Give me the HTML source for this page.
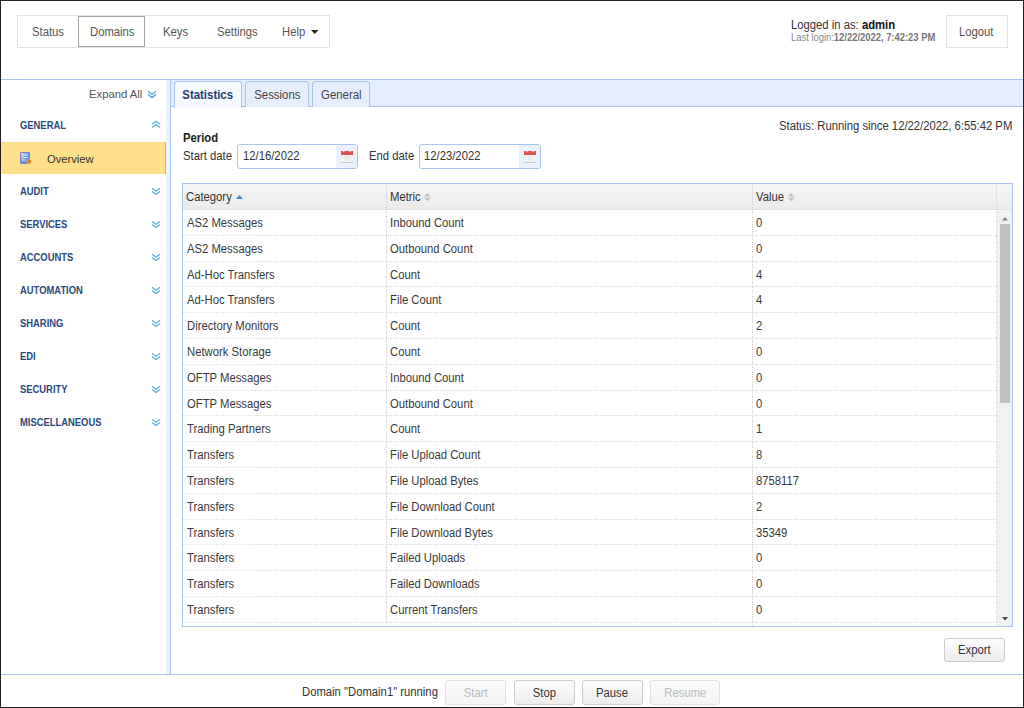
<!DOCTYPE html>
<html><head><meta charset="utf-8">
<style>
*{box-sizing:border-box;margin:0;padding:0}
html,body{width:1024px;height:708px;overflow:hidden;background:#fff}
body{position:relative;font-family:"Liberation Sans",sans-serif;font-size:12px;color:#333}
.a{position:absolute}
.t{position:absolute;white-space:nowrap;line-height:14px;height:14px;transform:scaleX(0.94);transform-origin:0 0}
#frame{position:absolute;left:0;top:0;width:1024px;height:708px;border:1px solid #222;z-index:50;pointer-events:none}
#nav{left:17px;top:15px;width:313px;height:33px;border:1px solid #e4e4e8}
#dom{left:78px;top:16px;width:67px;height:31px;border:1px solid #a3a3a3}
.navt{color:#555}
#logout{left:946px;top:15px;width:62px;height:33px;border:1px solid #e4e4e8}
#hline{left:0;top:79px;width:1024px;height:1px;background:#a9c5ec}
#fline{left:0;top:674px;width:1024px;height:1px;background:#a9c5ec}
#strip{left:166px;top:80px;width:4px;height:594px;background:#ecf2fb}
#vline{left:170px;top:80px;width:1px;height:594px;background:#a9c5ec}
#tabbar{left:171px;top:80px;width:852px;height:27px;background:#e3edfb;border-bottom:1px solid #a9c5ec}
.tab{position:absolute;top:1px;height:26px;border:1px solid #a9c5ec;border-bottom:none;border-radius:4px 4px 0 0;background:#e6eefb;text-align:center;line-height:26px;color:#444;white-space:nowrap}
.tab span{display:inline-block;transform:scaleX(0.95)}
.tab.act{background:#f6f9fe;height:27px;font-weight:bold;color:#1f3d6e}
.sec{color:#2b4a7c;font-weight:bold;font-size:10px}
#ov{left:1px;top:142px;width:165px;height:32px;background:#ffe08a;border-right:1.5px solid #f5a840}
.inp{position:absolute;top:144px;height:25px;border:1px solid #a9c5ec;border-radius:3px;background:#fff;overflow:hidden}
.inp .cal{position:absolute;right:0;top:0;width:21px;height:23px;background:#eaf1fc}
#tbl{left:182px;top:183px;width:831px;height:444px;border:1px solid #a9c5ec;overflow:hidden;background:#fff}
#thead{position:absolute;left:0;top:0;width:829px;height:26px;background:linear-gradient(#f5f5f5,#ebebeb);border-bottom:1px solid #e2e2e2}
.cd{position:absolute;top:0;width:1px;background:repeating-linear-gradient(#d8d8d8 0 1.25px,transparent 1.25px 2.5px)}
.row{position:absolute;left:0;width:814px;height:25.8px;background:repeating-linear-gradient(90deg,#dedede 0 1.25px,transparent 1.25px 2.5px) left bottom/100% 1px no-repeat}
.row span{position:absolute;top:6px;color:#3a3a3a;line-height:14px;white-space:nowrap;transform:scaleX(0.94);transform-origin:0 0}
#sb{position:absolute;left:814px;top:26px;width:15px;height:417px;background:#f1f1f1}
.btn{position:absolute;border:1px solid #cbcbcb;border-radius:3px;background:linear-gradient(#fdfdfd,#ececec);text-align:center;color:#333;white-space:nowrap}
.btn span{display:inline-block;transform:scaleX(0.94)}
.btn.dis{border-color:#e0e0e0;background:linear-gradient(#fbfbfb,#f3f3f3);color:#bbb}
</style></head><body>

<div id="nav" class="a"></div>
<div id="dom" class="a"></div>
<div class="t navt" style="left:32px;top:25px">Status</div>
<div class="t navt" style="left:89.5px;top:25px">Domains</div>
<div class="t navt" style="left:163px;top:25px">Keys</div>
<div class="t navt" style="left:216.5px;top:25px">Settings</div>
<div class="t navt" style="left:281.5px;top:25px">Help</div>
<svg class="a" style="left:311px;top:30px" width="8" height="4"><path d="M0 0H7.5L3.75 4Z" fill="#222"/></svg>

<div class="t" style="left:790.5px;top:18px;color:#333">Logged in as: <b style="color:#111">admin</b></div>
<div class="t" style="left:790.5px;top:30.5px;font-size:10px;color:#888">Last login:<b style="color:#777">12/22/2022, 7:42:23 PM</b></div>
<div id="logout" class="a"></div>
<div class="t navt" style="left:959px;top:25px">Logout</div>

<div id="hline" class="a"></div>
<div id="fline" class="a"></div>

<div class="t" style="left:89px;top:87px;color:#555;font-size:11.3px;transform:none">Expand All</div>
<svg class="a" style="left:147px;top:90px" width="10" height="9"><path d="M1 1.2L5 4.2L9 1.2M1 4.6L5 7.6L9 4.6" stroke="#4aa3e0" stroke-width="1.3" fill="none"/></svg>

<div class="t sec" style="left:19.5px;top:118.5px">GENERAL</div>
<svg class="a" style="left:151px;top:120px" width="10" height="9"><path d="M1 4.2L5 1.2L9 4.2M1 7.6L5 4.6L9 7.6" stroke="#5aaee2" stroke-width="1.2" fill="none"/></svg>
<div id="ov" class="a"></div>
<svg class="a" style="left:20px;top:152px" width="13" height="13">
  <defs><linearGradient id="ig" x1="0" y1="0" x2="1" y2="1"><stop offset="0" stop-color="#d8e8fa"/><stop offset="0.5" stop-color="#5e9ae0"/><stop offset="1" stop-color="#6a78c0"/></linearGradient></defs>
  <path d="M0.5 0.5H9.5V10.5L7.5 11.5H0.5Z" fill="url(#ig)" stroke="#8a7cc0" stroke-width="1"/>
  <path d="M2 3H8M2 5.5H8M2 8H6" stroke="#e8eef8" stroke-width="1"/>
  <circle cx="9.2" cy="9.6" r="2.4" fill="#e6a422"/>
  <circle cx="9.2" cy="9.6" r="1" fill="#9a6a10"/>
  <path d="M9.2 6.6V7.4M9.2 11.8V12.6M6.2 9.6H7M11.4 9.6H12.2" stroke="#f0c060" stroke-width="1"/>
</svg>
<div class="t" style="left:47px;top:151.5px;color:#333;font-size:11.5px;transform:scaleX(0.97)">Overview</div>

<div class="t sec" style="left:19.5px;top:184.5px">AUDIT</div>
<div class="t sec" style="left:19.5px;top:217.5px">SERVICES</div>
<div class="t sec" style="left:19.5px;top:250.5px">ACCOUNTS</div>
<div class="t sec" style="left:19.5px;top:283.5px">AUTOMATION</div>
<div class="t sec" style="left:19.5px;top:316.5px">SHARING</div>
<div class="t sec" style="left:19.5px;top:349.5px">EDI</div>
<div class="t sec" style="left:19.5px;top:382.5px">SECURITY</div>
<div class="t sec" style="left:19.5px;top:415.5px">MISCELLANEOUS</div>
<svg class="a" style="left:151px;top:187px" width="10" height="300">
 <g stroke="#5aaee2" stroke-width="1.2" fill="none">
<path transform="translate(0,0)" d="M1 1.2L5 4.2L9 1.2M1 4.6L5 7.6L9 4.6"/>
<path transform="translate(0,33)" d="M1 1.2L5 4.2L9 1.2M1 4.6L5 7.6L9 4.6"/>
<path transform="translate(0,66)" d="M1 1.2L5 4.2L9 1.2M1 4.6L5 7.6L9 4.6"/>
<path transform="translate(0,99)" d="M1 1.2L5 4.2L9 1.2M1 4.6L5 7.6L9 4.6"/>
<path transform="translate(0,132)" d="M1 1.2L5 4.2L9 1.2M1 4.6L5 7.6L9 4.6"/>
<path transform="translate(0,165)" d="M1 1.2L5 4.2L9 1.2M1 4.6L5 7.6L9 4.6"/>
<path transform="translate(0,198)" d="M1 1.2L5 4.2L9 1.2M1 4.6L5 7.6L9 4.6"/>
<path transform="translate(0,231)" d="M1 1.2L5 4.2L9 1.2M1 4.6L5 7.6L9 4.6"/>
 </g>
</svg>

<div id="strip" class="a"></div>
<div id="vline" class="a"></div>

<div id="tabbar" class="a">
  <div class="tab act" style="left:3px;width:68px"><span>Statistics</span></div>
  <div class="tab" style="left:74px;width:64px"><span>Sessions</span></div>
  <div class="tab" style="left:141px;width:58px"><span>General</span></div>
</div>

<div class="t" style="left:779px;top:118.5px;color:#333">Status: Running since 12/22/2022, 6:55:42 PM</div>
<div class="t" style="left:182.5px;top:131px;font-weight:bold;color:#222">Period</div>
<div class="t" style="left:182.5px;top:149px">Start date</div>
<div class="inp" style="left:237px;width:121px"><div class="cal"></div></div>
<svg class="a" width="12" height="12" style="left:341px;top:151px"><rect x="0" y="0.5" width="12" height="11" fill="#f2f2f2"/><rect x="0" y="0" width="12" height="4" fill="#d9534f"/><rect x="2" y="0" width="1.5" height="1.2" fill="#f6c9c6"/><rect x="8.5" y="0" width="1.5" height="1.2" fill="#f6c9c6"/><rect x="0" y="11" width="12" height="1" fill="#c8c8c8"/><path d="M3.5 6.5h5M3.5 8.8h5" stroke="#e0e0e0" stroke-width="1"/></svg>
<div class="t" style="left:242.5px;top:149px">12/16/2022</div>
<div class="t" style="left:368.5px;top:149px">End date</div>
<div class="inp" style="left:419px;width:122px"><div class="cal"></div></div>
<svg class="a" width="12" height="12" style="left:523.5px;top:151px"><rect x="0" y="0.5" width="12" height="11" fill="#f2f2f2"/><rect x="0" y="0" width="12" height="4" fill="#d9534f"/><rect x="2" y="0" width="1.5" height="1.2" fill="#f6c9c6"/><rect x="8.5" y="0" width="1.5" height="1.2" fill="#f6c9c6"/><rect x="0" y="11" width="12" height="1" fill="#c8c8c8"/><path d="M3.5 6.5h5M3.5 8.8h5" stroke="#e0e0e0" stroke-width="1"/></svg>
<div class="t" style="left:424px;top:149px">12/23/2022</div>

<div id="tbl" class="a">
  <div id="thead">
    <span class="t" style="left:3px;top:6px">Category</span>
    <svg class="a" style="left:52.5px;top:11px" width="7" height="4"><path d="M0 4H7L3.5 0Z" fill="#4a82cc"/></svg>
    <span class="t" style="left:206.5px;top:6px">Metric</span>
    <svg class="a" style="left:240.5px;top:8.5px" width="7" height="9"><path d="M0 3.5H6.5L3.25 0Z M0 4.8H6.5L3.25 8.3Z" fill="#c4c4c4"/></svg>
    <span class="t" style="left:573px;top:6px">Value</span>
    <svg class="a" style="left:604.5px;top:8.5px" width="7" height="9"><path d="M0 3.5H6.5L3.25 0Z M0 4.8H6.5L3.25 8.3Z" fill="#c4c4c4"/></svg>
  </div>
<div class="row" style="top:26.0px"><span style="left:3.5px">AS2 Messages</span><span style="left:206.5px">Inbound Count</span><span style="left:573px">0</span></div>
<div class="row" style="top:51.8px"><span style="left:3.5px">AS2 Messages</span><span style="left:206.5px">Outbound Count</span><span style="left:573px">0</span></div>
<div class="row" style="top:77.6px"><span style="left:3.5px">Ad-Hoc Transfers</span><span style="left:206.5px">Count</span><span style="left:573px">4</span></div>
<div class="row" style="top:103.4px"><span style="left:3.5px">Ad-Hoc Transfers</span><span style="left:206.5px">File Count</span><span style="left:573px">4</span></div>
<div class="row" style="top:129.2px"><span style="left:3.5px">Directory Monitors</span><span style="left:206.5px">Count</span><span style="left:573px">2</span></div>
<div class="row" style="top:155.0px"><span style="left:3.5px">Network Storage</span><span style="left:206.5px">Count</span><span style="left:573px">0</span></div>
<div class="row" style="top:180.8px"><span style="left:3.5px">OFTP Messages</span><span style="left:206.5px">Inbound Count</span><span style="left:573px">0</span></div>
<div class="row" style="top:206.6px"><span style="left:3.5px">OFTP Messages</span><span style="left:206.5px">Outbound Count</span><span style="left:573px">0</span></div>
<div class="row" style="top:232.4px"><span style="left:3.5px">Trading Partners</span><span style="left:206.5px">Count</span><span style="left:573px">1</span></div>
<div class="row" style="top:258.2px"><span style="left:3.5px">Transfers</span><span style="left:206.5px">File Upload Count</span><span style="left:573px">8</span></div>
<div class="row" style="top:284.0px"><span style="left:3.5px">Transfers</span><span style="left:206.5px">File Upload Bytes</span><span style="left:573px">8758117</span></div>
<div class="row" style="top:309.8px"><span style="left:3.5px">Transfers</span><span style="left:206.5px">File Download Count</span><span style="left:573px">2</span></div>
<div class="row" style="top:335.6px"><span style="left:3.5px">Transfers</span><span style="left:206.5px">File Download Bytes</span><span style="left:573px">35349</span></div>
<div class="row" style="top:361.4px"><span style="left:3.5px">Transfers</span><span style="left:206.5px">Failed Uploads</span><span style="left:573px">0</span></div>
<div class="row" style="top:387.2px"><span style="left:3.5px">Transfers</span><span style="left:206.5px">Failed Downloads</span><span style="left:573px">0</span></div>
<div class="row" style="top:413.0px"><span style="left:3.5px">Transfers</span><span style="left:206.5px">Current Transfers</span><span style="left:573px">0</span></div>
<div class="row" style="top:438.8px"><span style="left:3.5px">Transfers</span><span style="left:206.5px">Total Transfers</span><span style="left:573px">0</span></div>
  <div class="cd" style="left:203px;height:442px"></div>
  <div class="cd" style="left:569px;height:442px"></div>
  <div class="cd" style="left:813px;height:442px"></div>
  <div id="sb">
    <svg class="a" style="left:5px;top:6.5px" width="6" height="4"><path d="M0 3.5H6L3 0Z" fill="#888"/></svg>
    <div class="a" style="left:3px;top:14px;width:10px;height:179px;background:#c1c1c1"></div>
    <svg class="a" style="left:5px;top:407px" width="6" height="4"><path d="M0 0H6L3 3.5Z" fill="#444"/></svg>
  </div>
</div>

<div class="btn" style="left:944px;top:638px;width:61px;height:24px;line-height:22px"><span>Export</span></div>

<div class="t" style="left:302px;top:685px">Domain "Domain1" running</div>
<div class="btn dis" style="left:445px;top:680px;width:61px;height:25px;line-height:24.5px"><span>Start</span></div>
<div class="btn" style="left:514px;top:680px;width:61px;height:25px;line-height:24.5px"><span>Stop</span></div>
<div class="btn" style="left:582px;top:680px;width:61px;height:25px;line-height:24.5px"><span>Pause</span></div>
<div class="btn dis" style="left:650px;top:680px;width:70px;height:25px;line-height:24.5px"><span>Resume</span></div>

<div id="frame"></div>
</body></html>
